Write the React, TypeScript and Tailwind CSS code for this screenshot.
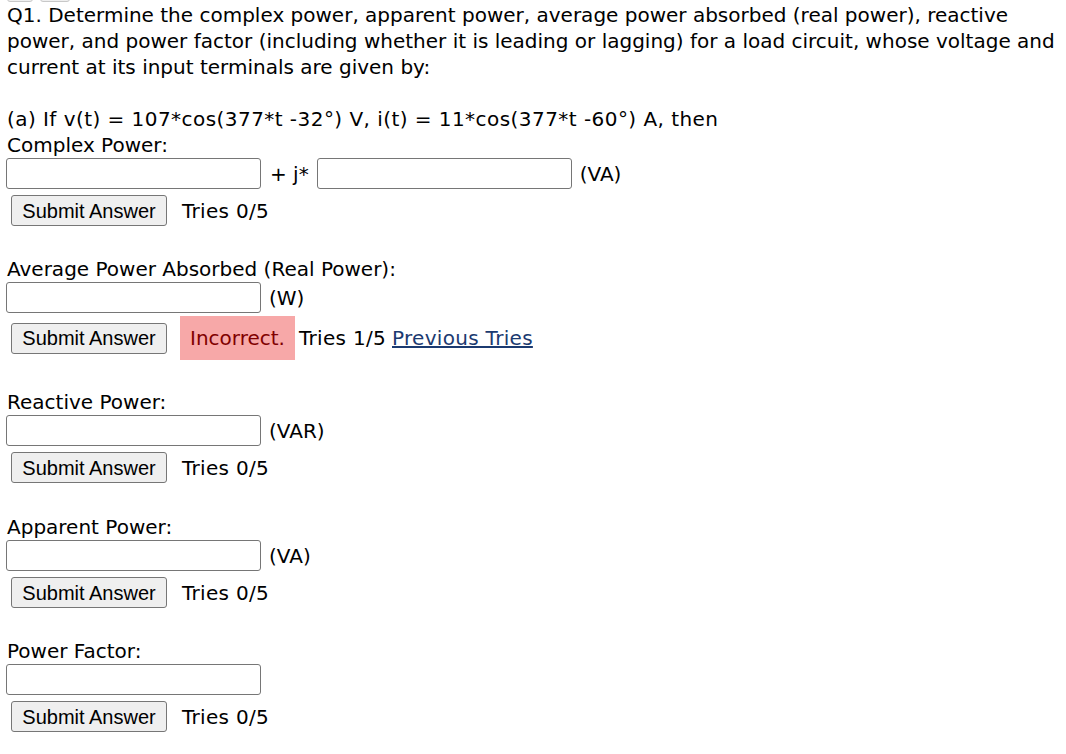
import React from 'react';

const FONT = "font-['DejaVu_Sans',Verdana,sans-serif]";

const AnswerBox = () => (
  <input
    type="text"
    className="w-[255px] h-[31px] rounded-[3px] border border-[#767676] bg-white px-1 outline-none"
  />
);

const SubmitRow = ({ tries, incorrect = false }: { tries: string; incorrect?: boolean }) => (
  <div className="flex items-center">
    <button className="ml-[5px] h-[31px] w-[156px] rounded-[3px] border border-[#767676] bg-[#efefef] font-['Liberation_Sans',Arial,sans-serif] text-[20px] text-black">
      Submit Answer
    </button>
    {incorrect ? (
      <>
        <span className="ml-[13px] flex h-[44px] items-center bg-[#f7a8a8] px-[10px] text-[#800000]">
          Incorrect.
        </span>
        <span className="ml-[4px] tracking-[0.3px]">{tries}</span>
        <a href="#" className="ml-[6px] tracking-[0.3px] text-[#1b3a70] underline">
          Previous Tries
        </a>
      </>
    ) : (
      <span className="ml-[15px] tracking-[0.3px]">{tries}</span>
    )}
  </div>
);

export default function App() {
  return (
    <div className={`${FONT} relative h-[754px] w-[1066px] overflow-hidden bg-white pl-[7px] text-[20px] leading-[26px] text-black`}>
      {/* bottoms of buttons scrolled out of view */}
      <div className="absolute left-[7px] top-[-10px] flex gap-[7px]">
        <div className="h-[12px] w-[26px] rounded-[3px] border border-[#c8c8c8] bg-[#efefef]" />
        <div className="h-[12px] w-[30px] rounded-[3px] border border-[#c8c8c8] bg-[#efefef]" />
      </div>

      <p className="pt-[2px] pr-[8px]">
        Q1. Determine the complex power, apparent power, average power absorbed (real power), reactive
        power, and power factor (including whether it is leading or lagging) for a load circuit, whose voltage and
        current at its input terminals are given by:
      </p>

      <p className="mt-[26px] tracking-[0.45px]">(a) If v(t) = 107*cos(377*t -32°) V, i(t) = 11*cos(377*t -60°) A, then</p>
      <p>Complex Power:</p>
      <div className="-ml-px flex items-center">
        <AnswerBox />
        <span className="ml-[9px] mr-[8px]">+ j*</span>
        <AnswerBox />
        <span className="ml-[8px]">(VA)</span>
      </div>
      <div className="-ml-px mt-[6px]">
        <SubmitRow tries="Tries 0/5" />
      </div>

      <p className="mt-[30px]">Average Power Absorbed (Real Power):</p>
      <div className="-ml-px flex items-center">
        <AnswerBox />
        <span className="ml-[8px]">(W)</span>
      </div>
      <div className="-ml-px mt-[3px]">
        <SubmitRow tries="Tries 1/5" incorrect />
      </div>

      <p className="mt-[29px]">Reactive Power:</p>
      <div className="-ml-px flex items-center">
        <AnswerBox />
        <span className="ml-[8px]">(VAR)</span>
      </div>
      <div className="-ml-px mt-[6px]">
        <SubmitRow tries="Tries 0/5" />
      </div>

      <p className="mt-[31px]">Apparent Power:</p>
      <div className="-ml-px flex items-center">
        <AnswerBox />
        <span className="ml-[8px]">(VA)</span>
      </div>
      <div className="-ml-px mt-[6px]">
        <SubmitRow tries="Tries 0/5" />
      </div>

      <p className="mt-[30px]">Power Factor:</p>
      <div className="-ml-px flex items-center">
        <AnswerBox />
      </div>
      <div className="-ml-px mt-[6px]">
        <SubmitRow tries="Tries 0/5" />
      </div>
    </div>
  );
}
